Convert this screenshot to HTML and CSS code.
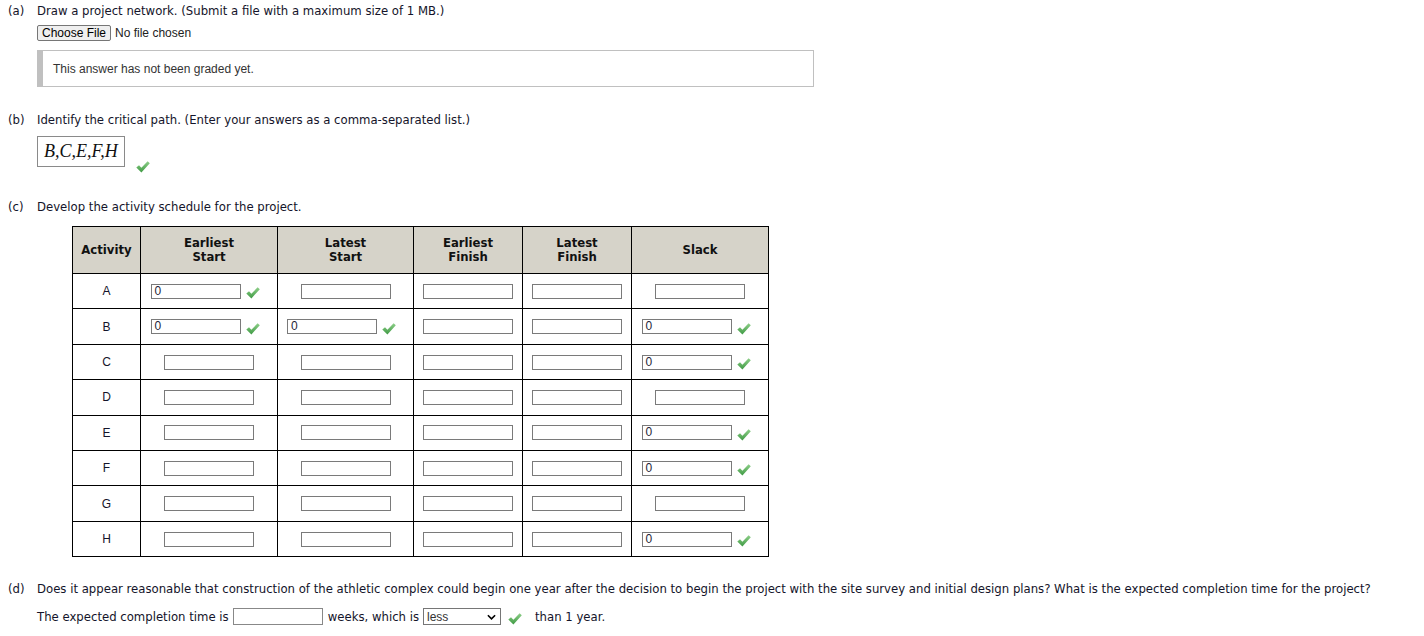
FILE: index.html
```html
<!DOCTYPE html>
<html lang="en">
<head>
    <meta charset="UTF-8">
    <title>Activity Schedule</title>
    <link rel="stylesheet" href="styles.css">
</head>
<body>

    <svg width="0" height="0" class="defs">
        <defs>
            <linearGradient id="ok" x1="0" y1="0" x2="0" y2="1">
                <stop offset="0" stop-color="#8fd08a"/>
                <stop offset="1" stop-color="#3f9a44"/>
            </linearGradient>
            <symbol id="check" viewBox="0 0 14 12">
                <path d="M0.3 6.4 L3 4.2 L5.4 6.8 L11.6 0.3 L13.8 2.2 L5.4 11.4 Z" fill="url(#ok)"/>
            </symbol>
        </defs>
    </svg>

    <!-- part a -->
    <div class="part partA">
        <div class="label">(a)</div>
        <div class="body">
            <div class="question">Draw a project network. (Submit a file with a maximum size of 1 MB.)</div>
            <div class="fileRow">
                <button class="fileBtn">Choose File</button>
                <span class="fileName">No file chosen</span>
            </div>
            <div class="graded">This answer has not been graded yet.</div>
        </div>
    </div>

    <!-- part b -->
    <div class="part partB">
        <div class="label">(b)</div>
        <div class="body">
            <div class="question">Identify the critical path. (Enter your answers as a comma-separated list.)</div>
            <div class="pathRow">
                <div class="mathBox">B,C,E,F,H</div>
                <svg class="tick tickLow"><use href="#check"/></svg>
            </div>
        </div>
    </div>

    <!-- part c -->
    <div class="part partC">
        <div class="label">(c)</div>
        <div class="body">
            <div class="question">Develop the activity schedule for the project.</div>
        </div>
    </div>

    <table class="schedule">
        <tr>
            <th class="c1">Activity</th>
            <th class="c2">Earliest<br>Start</th>
            <th class="c3">Latest<br>Start</th>
            <th class="c4">Earliest<br>Finish</th>
            <th class="c5">Latest<br>Finish</th>
            <th class="c6">Slack</th>
        </tr>
        <tr>
            <td>A</td>
            <td><span class="box filled">0</span><svg class="tick"><use href="#check"/></svg></td>
            <td><span class="box"></span></td>
            <td><span class="box"></span></td>
            <td><span class="box"></span></td>
            <td><span class="box"></span></td>
        </tr>
        <tr>
            <td>B</td>
            <td><span class="box filled">0</span><svg class="tick"><use href="#check"/></svg></td>
            <td><span class="box filled">0</span><svg class="tick"><use href="#check"/></svg></td>
            <td><span class="box"></span></td>
            <td><span class="box"></span></td>
            <td><span class="box filled">0</span><svg class="tick"><use href="#check"/></svg></td>
        </tr>
        <tr>
            <td>C</td>
            <td><span class="box"></span></td>
            <td><span class="box"></span></td>
            <td><span class="box"></span></td>
            <td><span class="box"></span></td>
            <td><span class="box filled">0</span><svg class="tick"><use href="#check"/></svg></td>
        </tr>
        <tr>
            <td>D</td>
            <td><span class="box"></span></td>
            <td><span class="box"></span></td>
            <td><span class="box"></span></td>
            <td><span class="box"></span></td>
            <td><span class="box"></span></td>
        </tr>
        <tr>
            <td>E</td>
            <td><span class="box"></span></td>
            <td><span class="box"></span></td>
            <td><span class="box"></span></td>
            <td><span class="box"></span></td>
            <td><span class="box filled">0</span><svg class="tick"><use href="#check"/></svg></td>
        </tr>
        <tr>
            <td>F</td>
            <td><span class="box"></span></td>
            <td><span class="box"></span></td>
            <td><span class="box"></span></td>
            <td><span class="box"></span></td>
            <td><span class="box filled">0</span><svg class="tick"><use href="#check"/></svg></td>
        </tr>
        <tr>
            <td>G</td>
            <td><span class="box"></span></td>
            <td><span class="box"></span></td>
            <td><span class="box"></span></td>
            <td><span class="box"></span></td>
            <td><span class="box"></span></td>
        </tr>
        <tr>
            <td>H</td>
            <td><span class="box"></span></td>
            <td><span class="box"></span></td>
            <td><span class="box"></span></td>
            <td><span class="box"></span></td>
            <td><span class="box filled">0</span><svg class="tick"><use href="#check"/></svg></td>
        </tr>
    </table>

    <!-- part d -->
    <div class="part partD">
        <div class="label">(d)</div>
        <div class="body">
            <div class="question">Does it appear reasonable that construction of the athletic complex could begin one year after the decision to begin the project with the site survey and initial design plans? What is the expected completion time for the project?</div>
            <div class="answerLine">
                <span>The expected completion time is</span>
                <span class="wideBox"></span>
                <span>weeks, which is</span>
                <span class="select">less<svg class="caret" viewBox="0 0 10 6"><path d="M1 1 L5 5 L9 1" fill="none" stroke="#000" stroke-width="1.8"/></svg></span>
                <svg class="tick"><use href="#check"/></svg>
                <span class="tail">than 1 year.</span>
            </div>
        </div>
    </div>

</body>
</html>
```

FILE: styles.css
```css
body {
    margin: 0;
    font-family: "DejaVu Sans", Verdana, sans-serif;
    font-size: 11.7px;
    color: #14142a;
    background-color: white;
}
.defs {
    position: absolute;
}
.part {
    display: flex;
}
.label {
    width: 37px;
    padding-left: 8px;
    box-sizing: border-box;
    line-height: 16px;
    flex-shrink: 0;
}
.body {
    flex: 1;
}
.question {
    line-height: 16px;
}
.partA {
    padding-top: 3px;
}
.fileRow {
    display: flex;
    align-items: center;
    margin-top: 6px;
    font-family: "Liberation Sans", Arial, sans-serif;
    font-size: 12px;
}
.fileBtn {
    font-family: "Liberation Sans", Arial, sans-serif;
    font-size: 12px;
    height: 16px;
    padding: 0 4px;
    border: 1px solid #767676;
    border-radius: 2px;
    background-color: #efefef;
    color: black;
    line-height: 14px;
}
.fileName {
    margin-left: 4px;
    color: #222;
}
.graded {
    width: 777px;
    height: 37px;
    box-sizing: border-box;
    margin-top: 9px;
    border: 1px solid #c0c0c0;
    border-left: 6px solid #c0c0c0;
    padding-left: 10px;
    display: flex;
    align-items: center;
    font-family: "Liberation Sans", Arial, sans-serif;
    font-size: 12px;
    color: #333;
}
.partB {
    margin-top: 25px;
}
.pathRow {
    display: flex;
    align-items: flex-end;
    margin-top: 8px;
}
.mathBox {
    width: 88px;
    height: 31px;
    box-sizing: border-box;
    border: 1px solid #8a8a8a;
    padding-left: 6px;
    display: flex;
    align-items: center;
    font-family: "Liberation Serif", "Times New Roman", serif;
    font-style: italic;
    font-size: 18px;
    color: #111;
}
.tick {
    width: 14px;
    height: 12px;
    flex-shrink: 0;
}
.tickLow {
    margin-left: 11px;
    margin-bottom: -6px;
}
.partC {
    margin-top: 32px;
}
.schedule {
    border-collapse: collapse;
    margin-top: 11px;
    margin-left: 72px;
}
.schedule th {
    background-color: #d6d3c9;
    font-weight: bold;
    height: 46px;
    line-height: 14px;
    border: 1px solid black;
    padding: 0;
    color: #111;
}
.schedule td {
    border: 1px solid black;
    height: 34.4px;
    padding: 0;
    text-align: center;
    font-family: "Liberation Sans", Arial, sans-serif;
    font-size: 12px;
    white-space: nowrap;
}
.c1 { width: 67px; }
.c2 { width: 136px; }
.c3 { width: 135px; }
.c4 { width: 108px; }
.c5 { width: 108px; }
.c6 { width: 136px; }
.box {
    display: inline-block;
    width: 90px;
    height: 15px;
    box-sizing: border-box;
    border: 1px solid #7a7a7a;
    vertical-align: middle;
    text-align: left;
    padding-left: 3px;
    line-height: 13px;
    font-size: 12px;
    color: #1f1f3a;
}
.box + .tick {
    vertical-align: middle;
    margin-left: 5px;
    margin-right: 8px;
    position: relative;
    top: 2px;
}
.partD {
    margin-top: 24px;
}
.answerLine {
    display: flex;
    align-items: center;
    margin-top: 11px;
}
.wideBox {
    width: 90px;
    height: 17px;
    box-sizing: border-box;
    border: 1px solid #888;
    margin: 0 5px 0 4px;
}
.select {
    width: 78px;
    height: 17px;
    box-sizing: border-box;
    border: 1px solid #767676;
    margin-left: 4px;
    padding: 0 4px 0 3px;
    display: flex;
    align-items: center;
    justify-content: space-between;
    font-family: "Liberation Sans", Arial, sans-serif;
    font-size: 12px;
    color: #333;
}
.caret {
    width: 9px;
    height: 6px;
}
.answerLine .tick {
    margin-left: 7px;
    margin-top: 4px;
}
.tail {
    margin-left: 13px;
}
```
